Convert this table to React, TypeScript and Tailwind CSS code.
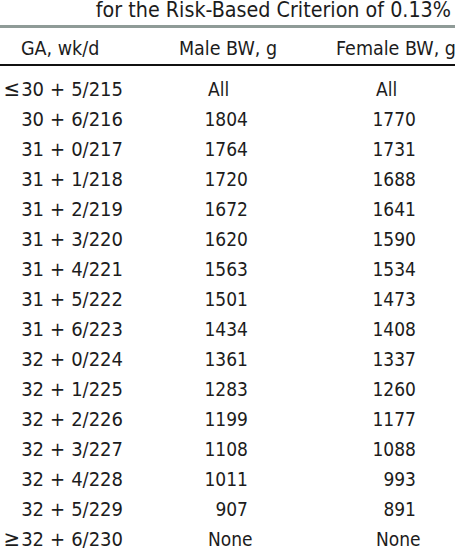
import React from "react";

const rows: [string, string, string][] = [
  ["≤30 + 5/215", "All", "All"],
  ["30 + 6/216", "1804", "1770"],
  ["31 + 0/217", "1764", "1731"],
  ["31 + 1/218", "1720", "1688"],
  ["31 + 2/219", "1672", "1641"],
  ["31 + 3/220", "1620", "1590"],
  ["31 + 4/221", "1563", "1534"],
  ["31 + 5/222", "1501", "1473"],
  ["31 + 6/223", "1434", "1408"],
  ["32 + 0/224", "1361", "1337"],
  ["32 + 1/225", "1283", "1260"],
  ["32 + 2/226", "1199", "1177"],
  ["32 + 3/227", "1108", "1088"],
  ["32 + 4/228", "1011", "993"],
  ["32 + 5/229", "907", "891"],
  ["≥32 + 6/230", "None", "None"],
];

function Cell({ v, className }: { v: string; className: string }) {
  const word = /[A-Za-z]/.test(v);
  return (
    <div className={`${className} w-[40px] flex ${word ? "justify-start" : "justify-end"} whitespace-nowrap`}>
      {v}
    </div>
  );
}

function GA({ v }: { v: string }) {
  const m = v.match(/^([≤≥]?)(\d+) \+ (.+)$/);
  if (!m) return <>{v}</>;
  return (
    <>
      {m[1] && <span className="text-[22px] mr-[1px]">{m[1]}</span>}
      {m[2]}
      <span className="px-[6px]">+</span>
      {m[3]}
    </>
  );
}

export default function App() {
  return (
    <div
      className="w-[455px] h-[554px] overflow-hidden bg-white text-[#1c1c1c] text-[19px]"
      style={{ fontFamily: '"Liberation Sans Narrow", "DejaVu Sans Condensed", "Liberation Sans", sans-serif' }}
    >
      <div className="h-[20px] leading-[20px] text-[21.3px] text-right pr-[4px] whitespace-nowrap">
        for the Risk-Based Criterion of 0.13%
      </div>
      <div className="mt-[5px] h-[3px] bg-[#8f9b97]" />
      <div className="mt-[6px] flex h-[30px] leading-[30px] whitespace-nowrap text-[19.5px]">
        <div className="w-[122px] pl-[21px]">GA, wk/d</div>
        <div className="ml-[86px] w-[40px] flex justify-center">Male BW, g</div>
        <div className="ml-[128px] w-[40px] flex justify-center">Female BW, g</div>
      </div>
      <div className="h-[2px] bg-[#111]" />
      <div className="mt-[8px] flex flex-col">
        {rows.map((r, i) => (
          <div key={i} className="flex h-[30px] leading-[30px]">
            <div className="w-[123px] -mr-[1px] text-right whitespace-nowrap text-[20px]">
              <GA v={r[0]} />
            </div>
            <Cell v={r[1]} className="ml-[86px]" />
            <Cell v={r[2]} className="ml-[128px]" />
          </div>
        ))}
      </div>
    </div>
  );
}
